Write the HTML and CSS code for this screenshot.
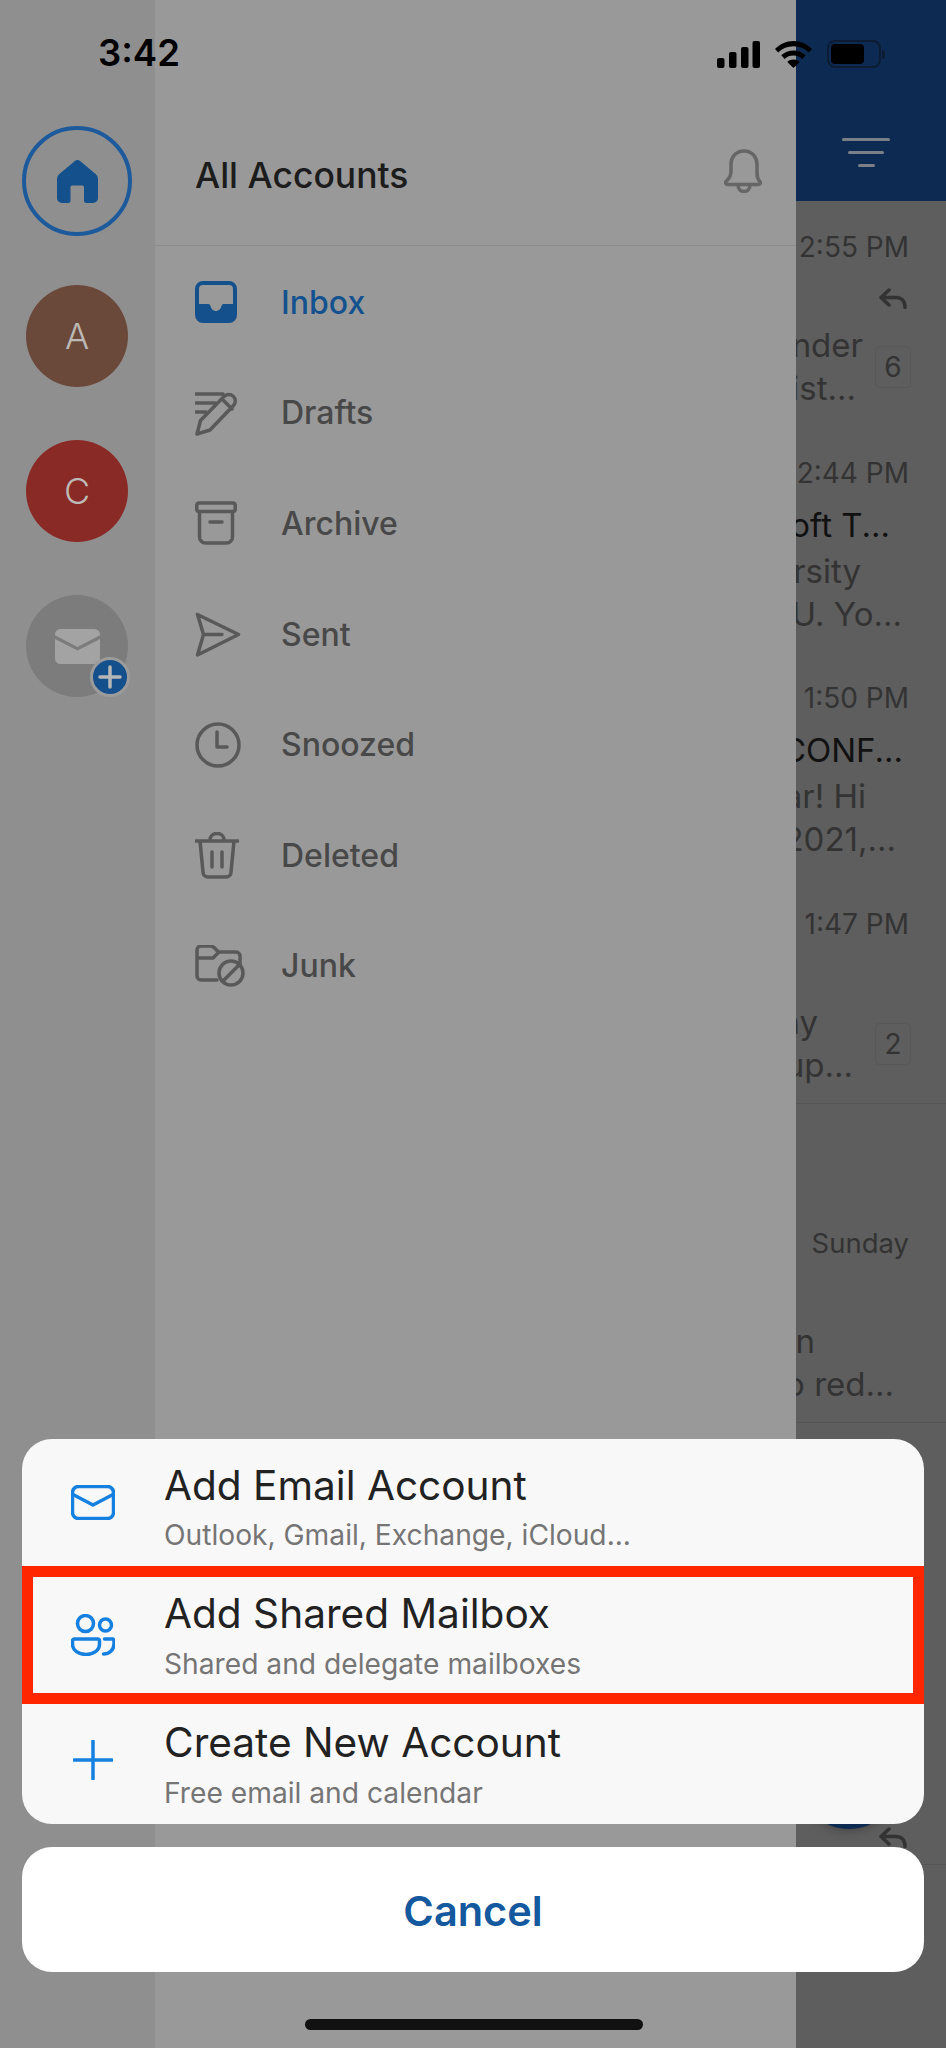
FILE: index.html
```html
<!DOCTYPE html>
<html lang="en">
<head>
<meta charset="utf-8">
<title>Outlook accounts</title>
<link rel="stylesheet" href="styles.css">
</head>
<body>
<div class="phone">
  <aside class="rail">
    <div class="home">
      <svg width="41" height="43" viewBox="0 0 41 43"><path class="fill-navy" d="M17.6 1.2a4.4 4.4 0 0 1 5.8 0L38.6 14a6 6 0 0 1 2.4 4.8V38a5 5 0 0 1-5 5h-6.500a2.500 2.500 0 0 1-2.500-2.500V27a1.500 1.500 0 0 0-1.500-1.500H15A1.500 1.500 0 0 0 13.500 27v13.500A2.500 2.500 0 0 1 11 43H5a5 5 0 0 1-5-5V18.800A6 6 0 0 1 2.400 14z"/></svg>
    </div>
    <div class="avatar avatar-a">A</div>
    <div class="avatar avatar-c">C</div>
    <div class="avatar avatar-add">
      <svg width="45" height="35" viewBox="0 0 45 35"><path class="fill-env" d="M0 5.500A5.500 5.500 0 0 1 5.500 0h34A5.500 5.500 0 0 1 45 5.500v.8L22.500 18 0 6.300zM0 10l22.500 11.600L45 10v19.500a5.500 5.500 0 0 1-5.500 5.500h-34A5.500 5.500 0 0 1 0 29.500z"/></svg>
      <span class="plus-badge">
        <svg width="24" height="24" viewBox="0 0 24 24"><path class="stroke-plus" d="M12 2v20M2 12h20"/></svg>
      </span>
    </div>
  </aside>

  <section class="drawer">
    <header class="drawer-head">
      <h1 class="drawer-title">All Accounts</h1>
      <svg class="bell" width="40" height="44" viewBox="0 0 40 44"><path class="stroke-bell" d="M20 2C11.500 2 7 8.500 7 15.500v7c0 4.500-2 7-4.500 9.500-1.500 1.500-1 3.500 1 3.500h31c2 0 2.500-2 1-3.500C33 29.500 33 27 33 22.500v-7C33 8.500 28.500 2 20 2zM14 36c0 4 2.500 6.500 6 6.500s6-2.500 6-6.500"/></svg>
    </header>
    <nav class="nav">
      <div class="nav-item nav-active">
        <span class="nav-icon"><svg width="42" height="42" viewBox="0 0 42 42"><path class="fill-navy" fill-rule="evenodd" d="M8 0h26a8 8 0 0 1 8 8v26a8 8 0 0 1-8 8H8a8 8 0 0 1-8-8V8a8 8 0 0 1 8-8zM8 4a4 4 0 0 0-4 4v15h9.500a2 2 0 0 1 1.800 1.500c.7 3 2.800 5.500 5.700 5.500s5-2.500 5.700-5.500a2 2 0 0 1 1.800-1.500H38V8a4 4 0 0 0-4-4z"/></svg></span>
        <span class="nav-label">Inbox</span>
      </div>
      <div class="nav-item">
        <span class="nav-icon"><svg width="46" height="47" viewBox="0 0 46 47"><path class="stroke-ic" d="M1 5h27M1 14h19M1 23h10M2 45l3.500-13.500L29 7.500a6.500 6.500 0 0 1 9.500 9L15 41zM27 10l10 10"/></svg></span>
        <span class="nav-label">Drafts</span>
      </div>
      <div class="nav-item">
        <span class="nav-icon"><svg width="42" height="44" viewBox="0 0 42 44"><path class="stroke-ic" d="M3.500 2h35a2 2 0 0 1 1.700 1.700v5a2 2 0 0 1-1.700 1.800h-35a2 2 0 0 1-1.700-1.800v-5A2 2 0 0 1 3.500 2zM4.500 10.500V36a6 6 0 0 0 6 6h21a6 6 0 0 0 6-6V10.500M15 21h12"/></svg></span>
        <span class="nav-label">Archive</span>
      </div>
      <div class="nav-item">
        <span class="nav-icon"><svg width="46" height="45" viewBox="0 0 46 45"><path class="stroke-ic" d="M2.500 2.500 43.500 22.500 2.500 43 8.500 22.500zM8.500 22.500H27"/></svg></span>
        <span class="nav-label">Sent</span>
      </div>
      <div class="nav-item">
        <span class="nav-icon"><svg width="46" height="46" viewBox="0 0 46 46"><circle class="stroke-ic" cx="23" cy="23" r="21"/><path class="stroke-ic" d="M22 10v15h10"/></svg></span>
        <span class="nav-label">Snoozed</span>
      </div>
      <div class="nav-item">
        <span class="nav-icon"><svg width="44" height="47" viewBox="0 0 44 47"><path class="stroke-ic" d="M1 9h42M15 8c0-4 3-6.500 7-6.500S29 4 29 8M5 9l3 31a5 5 0 0 0 5 5h18a5 5 0 0 0 5-5l3-31M17 20v15M27 20v15"/></svg></span>
        <span class="nav-label">Deleted</span>
      </div>
      <div class="nav-item">
        <span class="nav-icon"><svg width="50" height="42" viewBox="0 0 50 42"><path class="stroke-ic" d="M22 35H6a4 4 0 0 1-4-4V5a4 4 0 0 1 4-4h9c2 0 3 .5 4.500 2l4 4H41a4 4 0 0 1 4 4v9M2 13h16l6-6"/><circle class="stroke-ic" cx="36" cy="28" r="12"/><path class="stroke-ic" d="M28 36l16-16"/></svg></span>
        <span class="nav-label">Junk</span>
      </div>
    </nav>
  </section>

  <section class="list">
    <header class="list-head">
      <span class="filter-line filter-a"></span>
      <span class="filter-line filter-b"></span>
      <span class="filter-line filter-c"></span>
    </header>
    <article class="msg">
      <div class="time">2:55 PM</div>
      <div class="subject">
        <svg class="reply" width="28" height="21" viewBox="0 0 28 21"><path class="stroke-reply" d="M10 2 2 9.500l8 7.500M2.500 9.500H17c5.500 0 9 3.500 9 10"/></svg>
      </div>
      <div class="body">
        <div class="preview">
          <div class="line inset-83">nder</div>
          <div class="line inset-90">ist...</div>
        </div>
        <span class="badge">6</span>
      </div>
    </article>
    <article class="msg">
      <div class="time">2:44 PM</div>
      <div class="subject inset-56">soft T...</div>
      <div class="body">
        <div class="preview">
          <div class="line inset-85">rsity</div>
          <div class="line inset-44">U. Yo...</div>
        </div>
      </div>
    </article>
    <article class="msg">
      <div class="time">1:50 PM</div>
      <div class="subject inset-43">CONF...</div>
      <div class="body">
        <div class="preview">
          <div class="line inset-80">ar! Hi</div>
          <div class="line inset-50">2021,...</div>
        </div>
      </div>
    </article>
    <article class="msg msg-rule">
      <div class="time">1:47 PM</div>
      <div class="subject"></div>
      <div class="body">
        <div class="preview">
          <div class="line inset-128">ny</div>
          <div class="line inset-93">up...</div>
        </div>
        <span class="badge">2</span>
      </div>
    </article>
    <article class="msg msg-sunday">
      <div class="time">Sunday</div>
      <div class="preview">
        <div class="line inset-131">n</div>
        <div class="line inset-52">o red...</div>
      </div>
    </article>
    <article class="msg-last">
      <svg class="reply" width="28" height="21" viewBox="0 0 28 21"><path class="stroke-reply" d="M10 2 2 9.500l8 7.500M2.500 9.500H17c5.500 0 9 3.500 9 10"/></svg>
    </article>
  </section>

  <div class="status">
    <span class="clock">3:42</span>
    <span class="status-icons">
      <svg width="43" height="27" viewBox="0 0 43 27"><rect x="0" y="17" width="7.500" height="10" rx="2"/><rect x="12" y="11" width="7.500" height="16" rx="2"/><rect x="24" y="6" width="7.500" height="21" rx="2"/><rect x="35.500" y="0" width="7.500" height="27" rx="2"/></svg>
      <svg class="wifi" width="37" height="27" viewBox="0 0 37 27"><path d="M18.500 0C26 0 32 3 37 8l-3.200 3.600C29.500 7.500 24.500 5.300 18.500 5.300S7.500 7.500 3.200 11.600L0 8C5 3 11 0 18.500 0zM18.500 9.500c4.800 0 8.800 1.800 12.200 4.800l-3.300 3.600c-2.400-2.200-5.400-3.400-8.900-3.400s-6.500 1.200-8.900 3.400l-3.300-3.600c3.400-3 7.400-4.800 12.200-4.800zM18.500 18.500c2.500 0 4.500.8 6.200 2.400L18.500 27l-6.200-6.100c1.700-1.600 3.700-2.400 6.200-2.400z"/></svg>
      <span class="battery"><span class="battery-fill"></span></span>
      <span class="battery-tip"></span>
    </span>
  </div>

  <div class="fab"></div>

  <div class="sheet">
    <div class="options">
      <div class="option option-email">
        <svg class="option-icon" width="44" height="35" viewBox="0 0 44 35"><rect class="stroke-blue" x="1.500" y="1.500" width="41" height="32" rx="6"/><path class="stroke-blue" d="M2 9.500l20 10.500 20-10.500"/></svg>
        <div class="option-text">
          <div class="option-title">Add Email Account</div>
          <div class="option-sub">Outlook, Gmail, Exchange, iCloud...</div>
        </div>
      </div>
      <div class="option option-shared">
        <svg class="option-icon" width="44" height="42" viewBox="0 0 44 42"><circle class="stroke-blue" cx="14.500" cy="9.500" r="8"/><circle class="stroke-blue" cx="34.500" cy="11" r="6"/><path class="stroke-blue" d="M4 25h22.500a2 2 0 0 1 2 2v3c0 6.500-6 10.500-13.500 10.500S1.500 36.500 1.500 30v-3A2 2 0 0 1 4 25zM33.500 25h8a1.500 1.500 0 0 1 1.500 1.500V30c0 6-5 10-10.500 10"/></svg>
        <div class="option-text">
          <div class="option-title">Add Shared Mailbox</div>
          <div class="option-sub">Shared and delegate mailboxes</div>
        </div>
      </div>
      <div class="option option-create">
        <svg class="option-icon" width="40" height="40" viewBox="0 0 40 40"><path class="stroke-blue" d="M20 1v38M1 20h38"/></svg>
        <div class="option-text">
          <div class="option-title">Create New Account</div>
          <div class="option-sub">Free email and calendar</div>
        </div>
      </div>
    </div>
    <div class="cancel">Cancel</div>
  </div>

  <div class="home-bar"></div>
</div>
</body>
</html>
```

FILE: styles.css
```css
* { box-sizing: border-box; }

html, body {
  margin: 0;
  padding: 0;
  background: #5e5e5e;
}

body {
  font-family: Inter, "Noto Sans", "Liberation Sans", sans-serif;
  overflow: hidden;
}

svg { display: block; flex: none; }

.phone {
  position: relative;
  width: 946px;
  height: 2048px;
  display: grid;
  grid-template-columns: 155px 641px 150px;
  overflow: hidden;
}

/* Rail */
.rail {
  background: #8f8f8f;
  display: flex;
  flex-direction: column;
  align-items: center;
  padding: 126px 1px 0 0;
}

.home {
  width: 110px;
  height: 110px;
  border: 4px solid #1c5a9c;
  border-radius: 50%;
  display: flex;
  align-items: center;
  justify-content: center;
  margin-bottom: 49px;
}

.fill-navy { fill: #14508c; }

.avatar {
  position: relative;
  width: 102px;
  height: 102px;
  border-radius: 50%;
  margin-bottom: 53px;
  display: flex;
  align-items: center;
  justify-content: center;
  font-size: 36px;
  font-weight: 300;
  color: #bdb9b6;
}

.avatar-a { background: #6a483a; }
.avatar-c { background: #8a2a26; }
.avatar-add { background: #7c7c7c; }

.fill-env { fill: #a3a3a3; }

.plus-badge {
  position: absolute;
  left: 64px;
  top: 62px;
  width: 40px;
  height: 40px;
  border-radius: 50%;
  background: #14508c;
  border: 3px solid #9b9b9b;
  display: flex;
  align-items: center;
  justify-content: center;
}

.stroke-plus { fill: none; stroke: #b7b7b7; stroke-width: 3.500; stroke-linecap: round; }

/* Drawer */
.drawer {
  background: #999999;
  position: relative;
  z-index: 1;
}

.drawer-head {
  height: 246px;
  border-bottom: 1px solid #8c8c8c;
  padding: 149px 32px 0 40px;
  display: flex;
  justify-content: space-between;
  align-items: flex-start;
}

.drawer-title {
  margin: 0;
  font-size: 35.500px;
  line-height: 54px;
  font-weight: 500;
  color: #1c1c1c;
}

.stroke-bell { fill: none; stroke: #666666; stroke-width: 3.500; stroke-linejoin: round; stroke-linecap: round; }

.nav { display: flex; flex-direction: column; padding-top: 1px; }

.nav-item {
  height: 110.600px;
  display: flex;
  align-items: center;
}

.nav-icon {
  width: 126px;
  padding-left: 40px;
  display: flex;
}

.nav-label {
  font-size: 32px;
  font-weight: 500;
  color: #484848;
}

.nav-active .nav-label { color: #14528f; }

.stroke-ic {
  fill: none;
  stroke: #595959;
  stroke-width: 3.500;
  stroke-linecap: round;
  stroke-linejoin: round;
}

/* Mail list */
.list {
  background: #5e5e5e;
  overflow: hidden;
  display: flex;
  flex-direction: column;
}

.list-head {
  height: 201px;
  flex: none;
  background: #0d2b52;
  display: flex;
  flex-direction: column;
  align-items: center;
  gap: 10px;
  padding: 138px 10px 0 0;
}

.filter-line {
  display: block;
  height: 3px;
  border-radius: 2px;
  background: #7a7f88;
}

.filter-a { width: 48px; }
.filter-b { width: 36px; }
.filter-c { width: 17px; }

.msg {
  height: 225.500px;
  flex: none;
  padding-top: 28px;
}

.msg-rule { height: 226px; border-bottom: 1px solid #555555; }

.msg-sunday {
  height: 319px;
  padding-top: 121px;
  border-bottom: 1px solid #555555;
}

.msg-last {
  height: 442px;
  flex: none;
  border-bottom: 1px solid #555555;
  display: flex;
  justify-content: flex-end;
  align-items: flex-end;
  padding: 0 39px 16px 0;
}

.time {
  height: 36px;
  line-height: 36px;
  font-size: 28px;
  color: #333333;
  display: flex;
  justify-content: flex-end;
  white-space: nowrap;
  padding-right: 37px;
}

.msg-sunday .time { font-size: 27.500px; }

.subject {
  height: 50px;
  margin-top: 9px;
  line-height: 50px;
  font-size: 33px;
  color: #111111;
  display: flex;
  justify-content: flex-end;
  align-items: center;
  white-space: nowrap;
}

.reply { margin-right: 39px; margin-top: -1px; }
.msg-last .reply { margin: 0; }

.stroke-reply { fill: none; stroke: #333333; stroke-width: 3.500; stroke-linecap: round; stroke-linejoin: round; }

.body { display: grid; align-items: center; }

.preview { grid-area: 1 / 1; min-width: 0; }
.msg-sunday .preview { margin-top: 59px; }

.line {
  height: 43px;
  line-height: 43px;
  font-size: 33px;
  color: #333333;
  display: flex;
  justify-content: flex-end;
  white-space: nowrap;
}

.inset-43 { padding-right: 43px; }
.inset-44 { padding-right: 44px; }
.inset-50 { padding-right: 50px; }
.inset-52 { padding-right: 52px; }
.inset-56 { padding-right: 56px; }
.inset-80 { padding-right: 80px; }
.inset-83 { padding-right: 83px; }
.inset-85 { padding-right: 85px; }
.inset-90 { padding-right: 90px; }
.inset-93 { padding-right: 93px; }
.inset-128 { padding-right: 128px; }
.inset-131 { padding-right: 131px; }

.badge {
  grid-area: 1 / 1;
  justify-self: end;
  width: 36px;
  height: 42px;
  margin-right: 35px;
  border: 1px solid #585858;
  border-radius: 5px;
  display: flex;
  align-items: center;
  justify-content: center;
  font-size: 28px;
  color: #333333;
}

/* Status bar */
.status {
  position: absolute;
  left: 0;
  top: 0;
  width: 946px;
  height: 80px;
  z-index: 3;
}

.clock {
  position: absolute;
  left: 98px;
  top: 31px;
  font-size: 36.500px;
  line-height: 44px;
  font-weight: 600;
  color: #000000;
}

.status-icons {
  position: absolute;
  left: 717px;
  top: 40px;
  display: flex;
  align-items: center;
  gap: 15px;
}

.battery {
  width: 54px;
  height: 28px;
  border: 2px solid #0b1c33;
  border-radius: 8px;
  padding: 2px;
  display: flex;
}

.battery-fill {
  width: 33px;
  height: 100%;
  background: #000000;
  border-radius: 4px;
}

.battery-tip {
  width: 3px;
  height: 9px;
  margin-left: -14px;
  background: #0b1c33;
  border-radius: 0 3px 3px 0;
}

/* Action sheet */
.fab {
  position: absolute;
  left: 799px;
  top: 1729px;
  width: 100px;
  height: 100px;
  border-radius: 50%;
  background: #0d2b52;
  box-shadow: 0 2px 10px rgba(0, 0, 0, 0.25);
  z-index: 2;
}

.sheet {
  position: absolute;
  left: 22px;
  top: 1439px;
  width: 902px;
  z-index: 4;
  display: flex;
  flex-direction: column;
  gap: 23px;
}

.options {
  background: #f9f8f8;
  border-radius: 30px;
  overflow: hidden;
  display: flex;
  flex-direction: column;
}

.option {
  display: flex;
  align-items: center;
  padding-left: 49px;
}

.option-icon { width: 44px; }

.option-text {
  align-self: flex-start;
  margin-left: 49px;
}

.option-email { height: 127px; }
.option-email .option-text { margin-top: 22px; }
.option-email .option-sub { margin-top: -1px; }

.option-shared {
  height: 138px;
  border: 11px solid #ff2600;
  padding-left: 38px;
}
.option-shared .option-text { margin-top: 12px; }

.option-create { height: 120px; padding-bottom: 8px; }
.option-create .option-text { margin-top: 14px; }
.option-create .option-icon { width: 40px; margin-left: 2px; margin-right: 2px; }

.option-title {
  height: 50px;
  line-height: 50px;
  font-size: 40.600px;
  color: #222222;
  white-space: nowrap;
}

.option-sub {
  height: 50px;
  line-height: 50px;
  font-size: 28.200px;
  color: #757575;
  white-space: nowrap;
}

.stroke-blue { fill: none; stroke: #1580e0; stroke-width: 3.500; stroke-linecap: round; stroke-linejoin: round; }

.cancel {
  height: 125px;
  padding-top: 2px;
  background: #ffffff;
  border-radius: 30px;
  display: flex;
  align-items: center;
  justify-content: center;
  font-size: 41.500px;
  font-weight: 600;
  color: #14589e;
}

.home-bar {
  position: absolute;
  left: 305px;
  top: 2019px;
  width: 338px;
  height: 11px;
  border-radius: 6px;
  background: #111111;
  z-index: 4;
}
```
